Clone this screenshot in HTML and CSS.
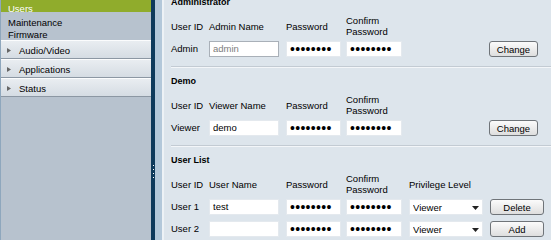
FILE: index.html
```html
<!DOCTYPE html>
<html lang="en">
<head>
  <meta charset="UTF-8" />
  <title>User Management</title>
  <link rel="stylesheet" href="styles.css">
</head>
<body>

  <aside class="sidebar">
    <ul class="subnav">
      <li class="active">Users</li>
      <li>Maintenance</li>
      <li class="last">Firmware</li>
    </ul>
    <div class="group"><svg class="arrow" width="4" height="5" viewBox="0 0 4 5"><path d="M0 0 L4 2.5 L0 5 Z" fill="#666"/></svg>Audio/Video</div>
    <div class="group"><svg class="arrow" width="4" height="5" viewBox="0 0 4 5"><path d="M0 0 L4 2.5 L0 5 Z" fill="#666"/></svg>Applications</div>
    <div class="group"><svg class="arrow" width="4" height="5" viewBox="0 0 4 5"><path d="M0 0 L4 2.5 L0 5 Z" fill="#666"/></svg>Status</div>
  </aside>

  <div class="splitter">
    <i></i><i></i><i></i><i></i>
  </div>
  <div class="strip"></div>

  <main class="main">

    <section class="panel">
      <h2>Administrator</h2>
      <div class="row labels">
        <span>User ID</span>
        <span>Admin Name</span>
        <span>Password</span>
        <span>Confirm<br>Password</span>
      </div>
      <div class="row data">
        <span>Admin</span>
        <input class="field name readonly" type="text" value="admin" readonly>
        <input class="field pw" type="password" value="password">
        <input class="field pw confirm" type="password" value="password">
        <span></span>
        <button class="btn">Change</button>
      </div>
    </section>

    <section class="panel">
      <h2>Demo</h2>
      <div class="row labels">
        <span>User ID</span>
        <span>Viewer Name</span>
        <span>Password</span>
        <span>Confirm<br>Password</span>
      </div>
      <div class="row data">
        <span>Viewer</span>
        <input class="field name" type="text" value="demo">
        <input class="field pw" type="password" value="password">
        <input class="field pw confirm" type="password" value="password">
        <span></span>
        <button class="btn">Change</button>
      </div>
    </section>

    <section class="panel">
      <h2>User List</h2>
      <div class="row labels">
        <span>User ID</span>
        <span>User Name</span>
        <span>Password</span>
        <span>Confirm<br>Password</span>
        <span>Privilege Level</span>
      </div>
      <div class="row data">
        <span>User 1</span>
        <input class="field name" type="text" value="test">
        <input class="field pw" type="password" value="password">
        <input class="field pw confirm" type="password" value="password">
        <div class="select">
          <select><option>Viewer</option><option>Operator</option><option>Admin</option></select>
          <svg class="caret" width="7" height="4" viewBox="0 0 7 4"><path d="M0 0 L7 0 L3.5 4 Z" fill="#222"/></svg>
        </div>
        <button class="btn wide">Delete</button>
      </div>
      <div class="row data">
        <span>User 2</span>
        <input class="field name" type="text" value="">
        <input class="field pw" type="password" value="password">
        <input class="field pw confirm" type="password" value="password">
        <div class="select">
          <select><option>Viewer</option><option>Operator</option><option>Admin</option></select>
          <svg class="caret" width="7" height="4" viewBox="0 0 7 4"><path d="M0 0 L7 0 L3.5 4 Z" fill="#222"/></svg>
        </div>
        <button class="btn wide">Add</button>
      </div>
    </section>

  </main>

</body>
</html>
```

FILE: styles.css
```css
* {
  box-sizing: border-box;
}

html,
body {
  height: 100%;
}

body {
  margin: 0;
  font-family: "Liberation Sans", Arial, sans-serif;
  font-size: 9.5px;
  color: #000;
  background: #dde5ec;
  display: flex;
  overflow: hidden;
}

/* left navigation */
.sidebar {
  flex: 0 0 151px;
  background: #b7c2ce;
  border-left: 1px solid #8ea7bd;
}

.subnav {
  list-style: none;
  margin: 0;
  padding: 0;
}

.subnav li {
  padding-left: 7px;
  line-height: 13px;
}

.subnav li.active {
  height: 12px;
  line-height: 17px;
  margin-bottom: 4px;
  background: #90ac2c;
  color: #fff;
}

.subnav li.last {
  line-height: 11px;
}

.group {
  display: flex;
  align-items: center;
  height: 19px;
  padding: 2px 0 0 6px;
  line-height: 14px;
  background: linear-gradient(#e9edf1, #d5dce3);
  border-top: 1px solid #fbfcfd;
  border-bottom: 1px solid #8c97a3;
}

.arrow {
  margin-right: 8px;
}

/* splitter between nav and page */
.splitter {
  flex: 0 0 4px;
  background: #0d3a5c;
  display: flex;
  flex-direction: column;
  align-items: center;
  gap: 3px;
  padding-top: 165px;
}

.splitter i {
  display: block;
  width: 1px;
  height: 1px;
  background: #fff;
}

.strip {
  flex: 0 0 9px;
  background: #b3c8da;
  border-right: 2px solid #edf2f6;
}

/* main page */
.main {
  flex: 1;
  padding-left: 7px;
  margin-top: -13px;
  overflow: hidden;
}

.panel {
  border-top: 1px solid #c3cbd3;
  box-shadow: inset 0 1px 0 #f3f6f9;
  padding: 8px 0 9px;
}

.panel h2 {
  margin: 0;
  font-size: 9px;
  font-weight: bold;
  line-height: 12px;
}

.row {
  display: grid;
  grid-template-columns: 38px 77px 60px 63px 80px 60px;
  align-items: center;
}

.labels {
  height: 22px;
  margin-top: 7px;
  line-height: 11px;
}

.data {
  height: 16px;
  margin-top: 4px;
  line-height: 16px;
}

.data + .data {
  margin-top: 6px;
}

.field {
  height: 16px;
  padding: 0 3px;
  border: 1px solid #e4e9ee;
  background: #fff;
  font: inherit;
  color: #000;
  outline: none;
}

.field.name {
  width: 70px;
}

.field.pw {
  width: 55px;
  font-size: 14px;
  line-height: 14px;
  letter-spacing: 0.3px;
}

.field.confirm {
  width: 56px;
}

.field.readonly {
  border-color: #a9b0b8;
  color: #7d7d7d;
}

.select {
  position: relative;
  width: 74px;
  height: 16px;
}

.select select {
  appearance: none;
  width: 100%;
  height: 16px;
  padding: 0 0 0 3px;
  border: 1px solid #e4e9ee;
  border-radius: 0;
  background: #fff;
  font: inherit;
  color: #000;
}

.caret {
  position: absolute;
  right: 4px;
  top: 7px;
}

.btn {
  width: 49px;
  height: 16px;
  padding: 0;
  border: 1px solid #6f7479;
  border-radius: 3px;
  background: linear-gradient(#fbfbfb, #dedede);
  font: inherit;
  color: #000;
}

.btn.wide {
  width: 54px;
  margin-left: 1px;
}
```
